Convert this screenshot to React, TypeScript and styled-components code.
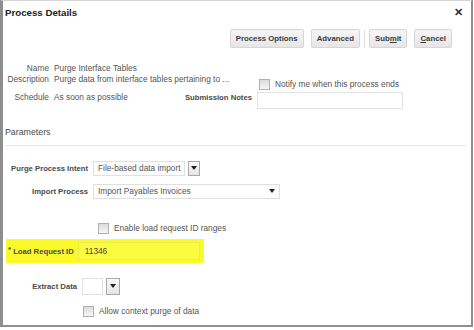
import React from 'react';
import styled, { createGlobalStyle } from 'styled-components';

const GlobalStyle = createGlobalStyle`
  html, body {
    margin: 0;
    padding: 0;
    background: #fff;
  }
  body {
    font-family: 'Liberation Sans', Arial, sans-serif;
    color: #444;
  }
`;

const Dialog = styled.div`
  box-sizing: border-box;
  width: 473px;
  height: 327px;
  border-top: 1px solid #d4d4d4;
  border-left: 3px solid #8e8e8e;
  border-right: 2px solid #8e8e8e;
  border-bottom: 2px solid #8e8e8e;
  background: #fff;
  display: flex;
  flex-direction: column;
`;

const Header = styled.div`
  height: 22px;
  display: flex;
  align-items: center;
  justify-content: space-between;
  padding: 0 8px 0 2px;
`;

const Title = styled.div`
  font-size: 9.7px;
  font-weight: bold;
  color: #222;
`;

const Close = styled.div`
  font-size: 11px;
  font-weight: bold;
  color: #333;
  line-height: 1;
`;

const Toolbar = styled.div`
  display: flex;
  justify-content: flex-end;
  align-items: center;
  gap: 7px;
  padding: 6px 19px 0 0;
`;

const Button = styled.div`
  box-sizing: border-box;
  height: 19px;
  padding: 0 5px;
  display: flex;
  align-items: center;
  font-size: 7.8px;
  font-weight: bold;
  color: #3c3c3c;
  background: linear-gradient(#f6f6f6, #e6e6e6);
  border: 1px solid #d6d6d6;
  border-radius: 2px;
`;

const Separator = styled.div`
  width: 1px;
  height: 18px;
  margin: 0 -3px;
  background: #e2e2e2;
`;

const InfoGrid = styled.div`
  display: grid;
  grid-template-columns: 44px 125px 68px auto;
  column-gap: 5px;
  grid-template-rows: 11px 17.5px 17px;
  padding: 15px 0 0 2px;
  font-size: 8.3px;
  line-height: 11px;
`;

const InfoLabel = styled.div`
  text-align: right;
  white-space: nowrap;
  color: #555;
`;

const InfoValue = styled.div<{ $span?: number }>`
  white-space: nowrap;
  color: #555;
  grid-column: span ${(p) => p.$span || 1};
`;

const BoldLabel = styled(InfoLabel)`
  font-size: 7.7px;
  font-weight: bold;
  color: #4a4a4a;
`;

const CheckRow = styled.div<{ $indent?: number; $top?: number }>`
  display: flex;
  align-items: center;
  gap: 5px;
  padding-left: ${(p) => p.$indent || 0}px;
  margin-top: ${(p) => p.$top || 0}px;
  font-size: 8.3px;
  color: #555;
  white-space: nowrap;
`;

const CheckBox = styled.div`
  box-sizing: border-box;
  width: 11px;
  height: 11px;
  border: 1px solid #b0b0b0;
  background: linear-gradient(#dcdcdc, #f6f6f6);
`;

const NotesBox = styled.div`
  box-sizing: border-box;
  width: 146px;
  height: 17px;
  border: 1px solid #e2e2e2;
  background: #fff;
`;

const SectionHeader = styled.div`
  margin: 17px 5px 0 2px;
  padding-bottom: 7px;
  border-bottom: 1px solid #e6e6e6;
  font-size: 8.8px;
  line-height: 12px;
  color: #4a4a4a;
`;

const FormGrid = styled.div<{ $label: number; $top: number; $gap?: number }>`
  display: grid;
  grid-template-columns: ${(p) => p.$label}px auto;
  column-gap: 5px;
  row-gap: ${(p) => p.$gap || 0}px;
  align-items: center;
  justify-items: start;
  margin-top: ${(p) => p.$top}px;
  padding-left: 2px;
`;

const FieldLabel = styled.div`
  justify-self: end;
  font-size: 7.7px;
  font-weight: bold;
  color: #4a4a4a;
  white-space: nowrap;
`;

const Choice = styled.div`
  display: flex;
  align-items: center;
  gap: 3px;
`;

const Field = styled.div<{ $w: number; $h: number }>`
  box-sizing: border-box;
  width: ${(p) => p.$w}px;
  height: ${(p) => p.$h}px;
  border: 1px solid #e0e0e0;
  background: #fff;
  display: flex;
  align-items: center;
  justify-content: space-between;
  padding-left: 4px;
  font-size: 8.3px;
  color: #555;
  white-space: nowrap;
`;

const DropButton = styled.div<{ $w: number; $h: number }>`
  box-sizing: border-box;
  width: ${(p) => p.$w}px;
  height: ${(p) => p.$h}px;
  border: 1px solid #a8a8a8;
  background: linear-gradient(#fbfbfb, #e4e4e4);
  display: flex;
  align-items: center;
  justify-content: center;
`;

const InnerDrop = styled.div`
  width: 14px;
  height: 100%;
  display: flex;
  align-items: center;
  justify-content: center;
`;

const Arrow = styled.div`
  width: 0;
  height: 0;
  border-left: 3px solid transparent;
  border-right: 3px solid transparent;
  border-top: 4px solid #222;
`;

const Highlight = styled.div`
  box-sizing: border-box;
  width: 198px;
  height: 24px;
  margin: 5px 0 0 3px;
  padding-left: 2px;
  background: #fafa2a;
  display: flex;
  align-items: center;
  gap: 4px;
`;

const Required = styled.span`
  font-size: 8px;
  vertical-align: 2px;
  margin-right: 2px;
`;

const YellowInput = styled.div`
  box-sizing: border-box;
  width: 122px;
  height: 18px;
  border: 1px solid #eded50;
  background: #fbfb40;
  display: flex;
  align-items: center;
  padding-left: 6px;
  font-size: 8.3px;
  color: #444;
`;

export default function App() {
  return (
    <>
      <GlobalStyle />
      <Dialog>
        <Header>
          <Title>Process Details</Title>
          <Close>✕</Close>
        </Header>
        <Toolbar>
          <Button>Process Options</Button>
          <Button>Advanced</Button>
          <Separator />
          <Button>
            Sub<u>m</u>it
          </Button>
          <Button>
            <u>C</u>ancel
          </Button>
        </Toolbar>

        <InfoGrid>
          <InfoLabel>Name</InfoLabel>
          <InfoValue $span={3}>Purge Interface Tables</InfoValue>
          <InfoLabel>Description</InfoLabel>
          <InfoValue $span={2}>Purge data from interface tables pertaining to ...</InfoValue>
          <CheckRow $indent={2} $top={3}>
            <CheckBox />
            Notify me when this process ends
          </CheckRow>
          <InfoLabel>Schedule</InfoLabel>
          <InfoValue>As soon as possible</InfoValue>
          <BoldLabel>Submission Notes</BoldLabel>
          <NotesBox />
        </InfoGrid>

        <SectionHeader>Parameters</SectionHeader>

        <FormGrid $label={83} $top={15} $gap={8}>
          <FieldLabel>Purge Process Intent</FieldLabel>
          <Choice>
            <Field $w={92} $h={15}>File-based data import</Field>
            <DropButton $w={12} $h={15}>
              <Arrow />
            </DropButton>
          </Choice>
          <FieldLabel>Import Process</FieldLabel>
          <Field $w={187} $h={15}>
            Import Payables Invoices
            <InnerDrop>
              <Arrow />
            </InnerDrop>
          </Field>
        </FormGrid>

        <CheckRow $indent={95} $top={24}>
          <CheckBox />
          Enable load request ID ranges
        </CheckRow>

        <Highlight>
          <FieldLabel>
            <Required>*</Required>Load Request ID
          </FieldLabel>
          <YellowInput>11346</YellowInput>
        </Highlight>

        <FormGrid $label={72} $top={15}>
          <FieldLabel>Extract Data</FieldLabel>
          <Choice>
            <Field $w={21} $h={17} />
            <DropButton $w={14} $h={17}>
              <Arrow />
            </DropButton>
          </Choice>
        </FormGrid>

        <CheckRow $indent={80} $top={11}>
          <CheckBox />
          Allow context purge of data
        </CheckRow>
      </Dialog>
    </>
  );
}
